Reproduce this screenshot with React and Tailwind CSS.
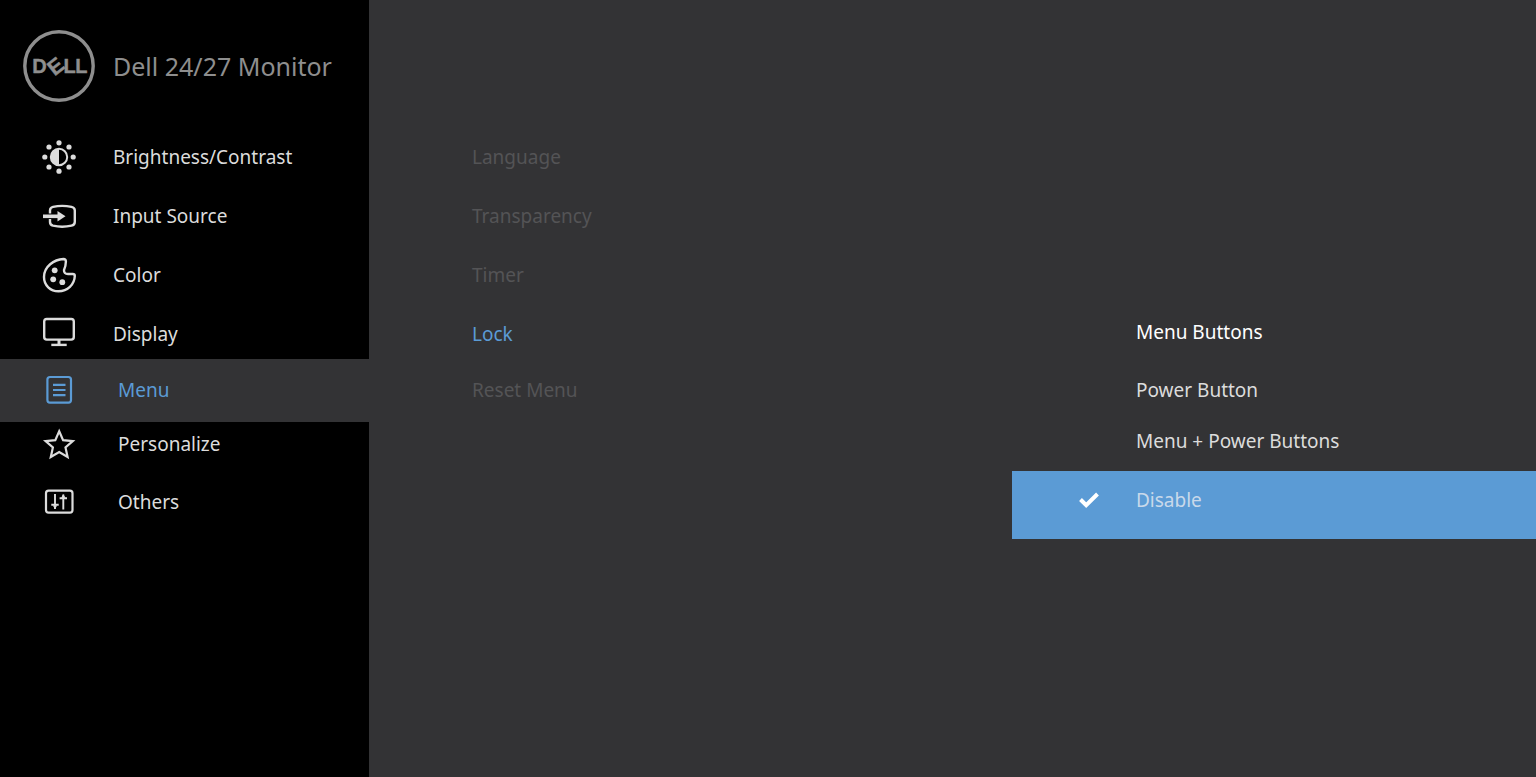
import React, { useState } from 'react';

function DellLogo() {
  return (
    <svg viewBox="0 0 72 72" className="w-[72px] h-[72px] shrink-0" fill="#8e8e8e" role="img" aria-label="Dell">
      <circle cx="36" cy="36" r="34.2" fill="none" stroke="#8e8e8e" strokeWidth="3.4" />
      <g fontFamily="'Liberation Sans', sans-serif" fontWeight="700" fontSize="20" stroke="#8e8e8e" strokeWidth="0.4">
        <text x="9.3" y="43">D</text>
        <text x="-7.5" y="7.5" fontSize="21.5" transform="translate(32.8 36) rotate(-38)">E</text>
        <text x="40.6" y="43">L</text>
        <text x="52.2" y="43">L</text>
      </g>
    </svg>
  );
}

function BrightnessIcon() {
  return (
    <svg viewBox="0 0 36 36" className="w-9 h-9" fill="currentColor">
      <circle cx="18" cy="18" r="8.2" fill="none" stroke="currentColor" strokeWidth="2" />
      <path d="M18 9.8a8.2 8.2 0 0 0 0 16.4z" />
      <circle cx="18" cy="3.8" r="2.6" />
      <circle cx="18" cy="32.2" r="2.6" />
      <circle cx="3.8" cy="18" r="2.6" />
      <circle cx="32.2" cy="18" r="2.6" />
      <circle cx="8" cy="8" r="2.6" />
      <circle cx="28" cy="8" r="2.6" />
      <circle cx="8" cy="28" r="2.6" />
      <circle cx="28" cy="28" r="2.6" />
    </svg>
  );
}

function InputIcon() {
  return (
    <svg viewBox="0 0 36 36" className="w-9 h-9" fill="none" stroke="currentColor" strokeWidth="2.4">
      <path d="M9 15.5v-3Q9 9.6 12 8.9Q21 6.8 30.500 8.9Q33.8 9.6 33.8 12.5V24Q33.8 26.9 30.500 27.7Q21 29.8 12 27.7Q9 26.9 9 24v-3" />
      <path d="M2 18.3h16" strokeWidth="3.6" />
      <path d="M16.5 13v10.600l8-5.300z" fill="currentColor" stroke="none" />
    </svg>
  );
}

function ColorIcon() {
  return (
    <svg viewBox="0 0 36 36" className="w-9 h-9" fill="currentColor">
      <path
        d="M22.5 2C13 2.500 3 9.500 3 20C3 28.500 9.500 34.300 17.500 34.300C26.500 34.300 33.500 27.500 33.800 19Q33.800 17 31.800 17H27Q22.800 17 23 13Q24.800 9 24.900 4.500Q24.800 2 22.500 2z"
        fill="none"
        stroke="currentColor"
        strokeWidth="2.4"
      />
      <circle cx="13.7" cy="13.3" r="2.9" />
      <circle cx="12.2" cy="22.3" r="2.9" />
      <circle cx="21.3" cy="25.2" r="2.9" />
    </svg>
  );
}

function DisplayIcon() {
  return (
    <svg viewBox="0 0 36 36" className="w-9 h-9" fill="none" stroke="currentColor" strokeWidth="2.4">
      <rect x="3.2" y="3" width="29.6" height="20.6" rx="2.6" />
      <path d="M18 23.5v5" strokeWidth="3" />
      <path d="M10.3 28.9h15.4" />
    </svg>
  );
}

function MenuIcon() {
  return (
    <svg viewBox="0 0 36 36" className="w-9 h-9" fill="none" stroke="currentColor" strokeWidth="2.2">
      <rect x="6.4" y="5" width="23.6" height="25.6" rx="2.6" />
      <path d="M12 12.8h12.5M12 18h12.5M12 23.2h12.5" />
    </svg>
  );
}

function StarIcon() {
  return (
    <svg viewBox="0 0 36 36" className="w-9 h-9" fill="none" stroke="currentColor" strokeWidth="2.2">
      <path d="M18.2 5.300l3.900 8.900 9.700.9-7.300 6.400 2.100 9.500-8.400-5-8.400 5 2.100-9.500-7.300-6.400 9.700-.9z" />
    </svg>
  );
}

function OthersIcon() {
  return (
    <svg viewBox="0 0 36 36" className="w-9 h-9" fill="none" stroke="currentColor" strokeWidth="2.2">
      <rect x="5" y="6.600" width="26.500" height="22" rx="2.600" />
      <path d="M14 10v15M22.300 10.500v15" strokeWidth="1.900" />
      <path d="M10.300 20.800h7.400M18.600 14.200h7.400" strokeWidth="1.900" />
      <path d="M11.800 21.500l2.200 3.500 2.200-3.500zM20.100 13.800l2.200-3.500 2.200 3.500z" fill="currentColor" stroke="none" />
    </svg>
  );
}

const categories = [
  { name: 'Brightness/Contrast', icon: BrightnessIcon, row: 'h-[59px]', gap: 'gap-9' },
  { name: 'Input Source', icon: InputIcon, row: 'h-[59px]', gap: 'gap-9' },
  { name: 'Color', icon: ColorIcon, row: 'h-[59px]', gap: 'gap-9' },
  { name: 'Display', icon: DisplayIcon, row: 'h-[55px] pt-1', gap: 'gap-9' },
  { name: 'Menu', icon: MenuIcon, row: 'h-[63px] pb-[2px]', gap: 'gap-[41px]' },
  { name: 'Personalize', icon: StarIcon, row: 'h-[44px]', gap: 'gap-[41px]' },
  { name: 'Others', icon: OthersIcon, row: 'h-[72px]', gap: 'gap-[41px]' },
];

const settings = [
  { name: 'Language', row: 'h-[59px]' },
  { name: 'Transparency', row: 'h-[59px]' },
  { name: 'Timer', row: 'h-[59px]' },
  { name: 'Lock', row: 'h-[55px] pt-1' },
  { name: 'Reset Menu', row: 'h-[63px] pb-[2px]' },
];

const lockOptions = [
  { name: 'Menu Buttons', row: 'h-[58px]', color: 'text-white' },
  { name: 'Power Button', row: 'h-[58px]', color: 'text-[#dcdcdc]' },
  { name: 'Menu + Power Buttons', row: 'h-[52px] pb-2', color: 'text-[#dcdcdc]' },
  { name: 'Disable', row: 'h-[68px] pb-[10px]', color: 'text-[#c9d9ea]' },
];

function App() {
  const [category, setCategory] = useState('Menu');
  const [setting, setSetting] = useState('Lock');
  const [option, setOption] = useState('Disable');

  return (
    <div className="flex min-h-screen bg-[#333335] font-['Noto_Sans',sans-serif] text-[19px] leading-6">
      <aside className="w-[369px] shrink-0 bg-black">
        <header className="flex items-center h-[127px] pl-[23px] pt-1 gap-[18px]">
          <DellLogo />
          <h1 className="text-[25px] leading-8 text-[#8e8e8e]">Dell 24/27 Monitor</h1>
        </header>
        <nav>
          {categories.map(({ name, icon: Icon, row, gap }) => (
            <button
              key={name}
              className={`flex items-center w-full pl-[41px] text-left ${row} ${gap} ${
                name === category ? 'bg-[#333335] text-[#5b9bd5]' : 'text-[#dcdcdc]'
              }`}
              onClick={() => setCategory(name)}
            >
              <Icon />
              {name}
            </button>
          ))}
        </nav>
      </aside>

      <main className="flex flex-1">
        <div className="flex-1 pt-[127px]">
          {settings.map(({ name, row }) => (
            <button
              key={name}
              className={`flex items-center w-full pl-[103px] text-left ${row} ${
                name === setting ? 'text-[#5b9bd5]' : 'text-[#545456]'
              }`}
              onClick={() => setSetting(name)}
            >
              {name}
            </button>
          ))}
        </div>

        <div className="w-[524px] shrink-0 pt-[303px]">
          {lockOptions.map(({ name, row, color }) => (
            <button
              key={name}
              className={`flex items-center w-full pl-[66px] text-left ${row} ${color} ${
                name === option ? 'bg-[#5b9bd5]' : ''
              }`}
              onClick={() => setOption(name)}
            >
              <span className="w-[58px]">
                {name === option && (
                  <svg viewBox="0 0 22 18" className="w-[22px] h-[18px]" fill="none" stroke="white" strokeWidth="4">
                    <path d="M2.5 8.5l5.7 5.7L19.5 3" />
                  </svg>
                )}
              </span>
              {name}
            </button>
          ))}
        </div>
      </main>
    </div>
  );
}

export default App;
